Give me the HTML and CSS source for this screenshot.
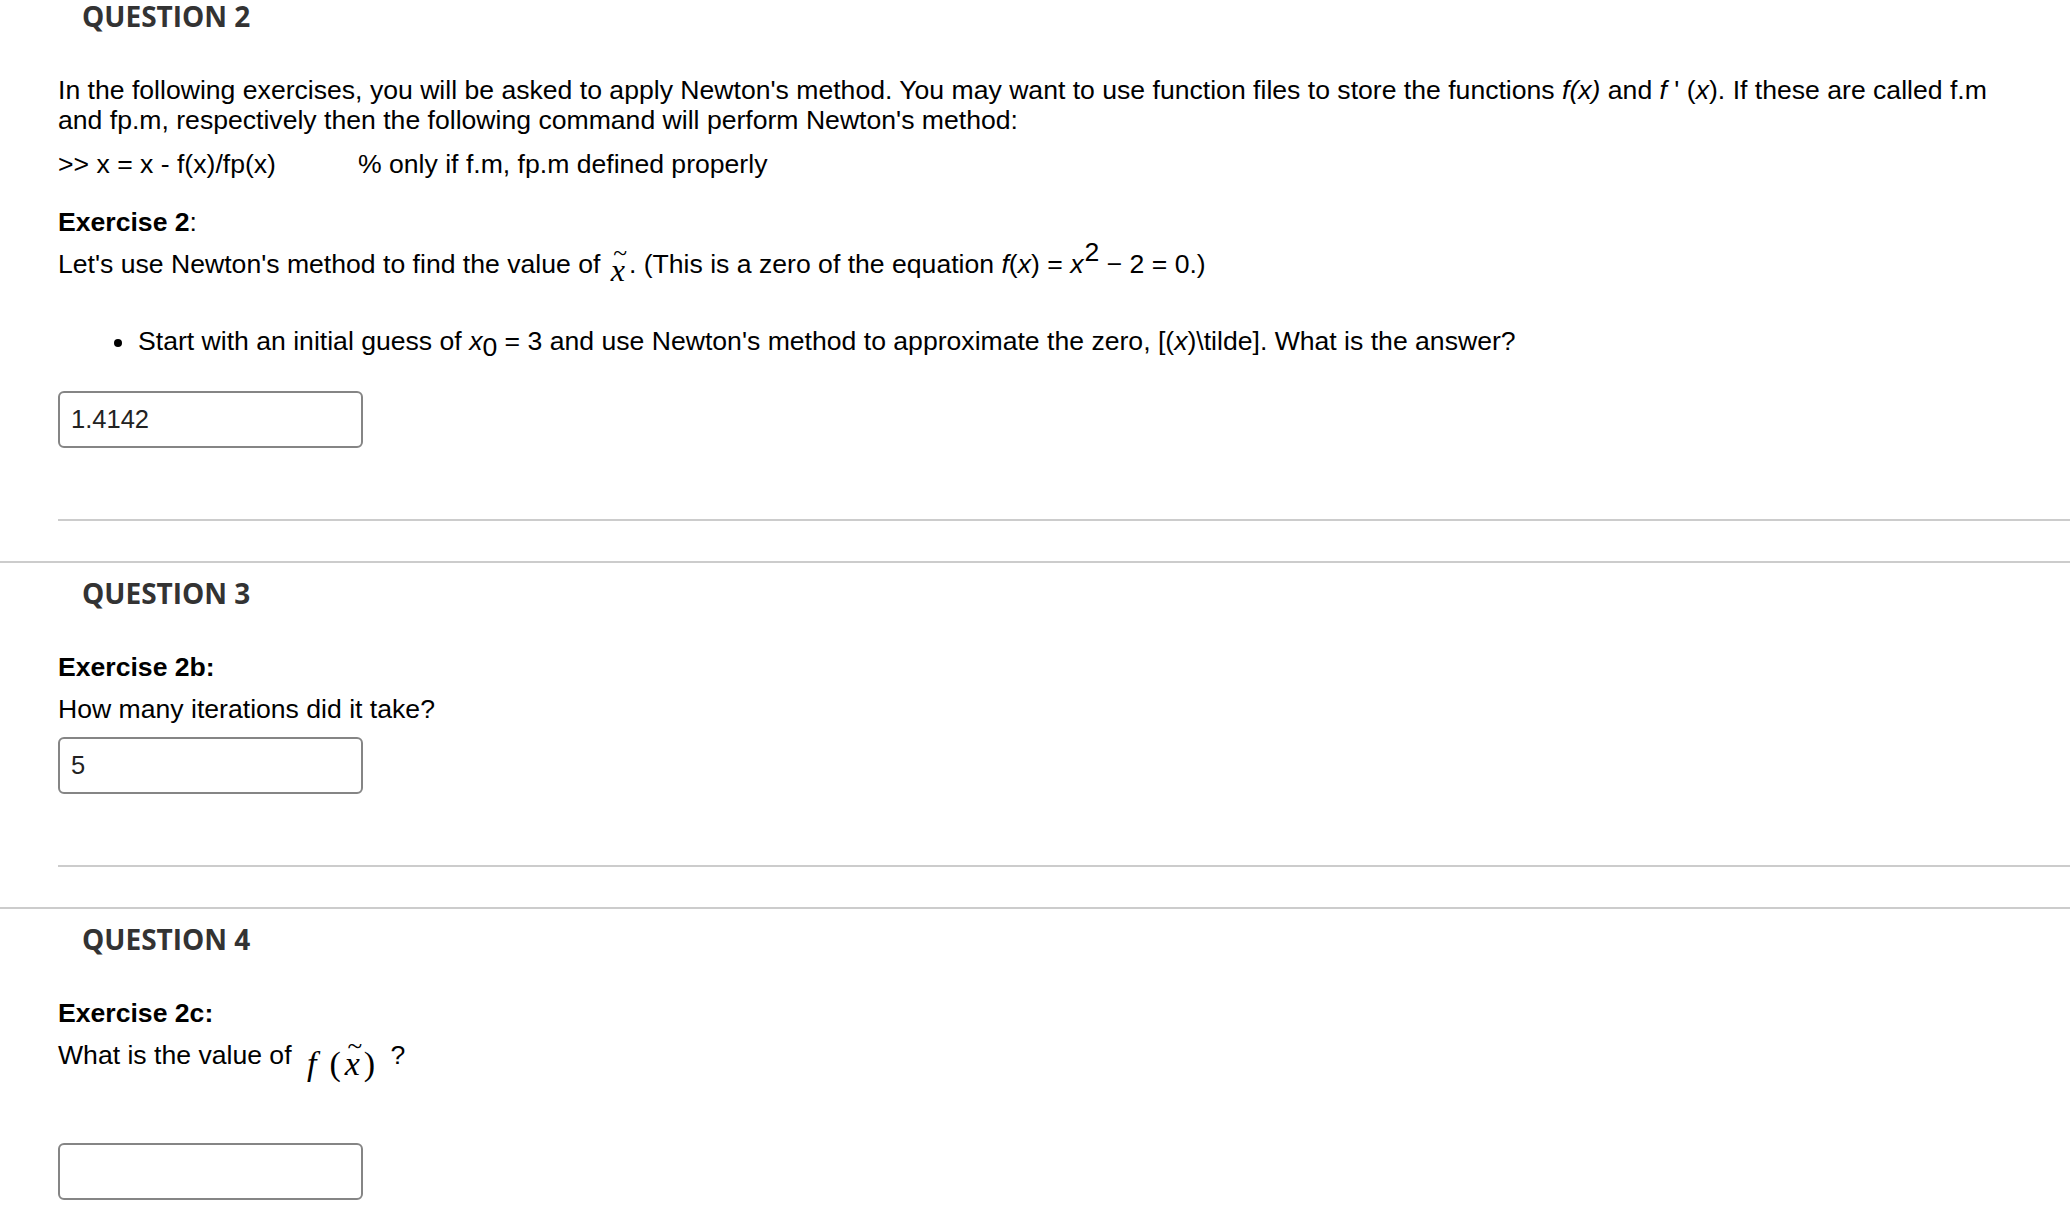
FILE: index.html
```html
<!DOCTYPE html>
<html lang="en">
<head>
<meta charset="utf-8">
<title>Questions</title>
<link rel="stylesheet" href="styles.css">
</head>
<body>
<div class="page">
  <section class="question">
    <h2 class="q-title">QUESTION 2</h2>
    <div class="q-body">
      <p class="para">In the following exercises, you will be asked to apply Newton's method. You may want to use function files to store the functions <i>f(x)</i> and <i>f</i> ' (<i>x</i>). If these are called f.m<br>and fp.m, respectively then the following command will perform Newton's method:</p>
      <p class="code"><span class="cmd">&gt;&gt; x = x - f(x)/fp(x)</span>% only if f.m, fp.m defined properly</p>
      <p class="ex ex-first"><b>Exercise 2</b>:</p>
      <p class="text">Let's use Newton's method to find the value of <span class="xt xt-low">x</span>. (This is a zero of the equation <i>f</i>(<i>x</i>) = <i>x</i><span class="sup">2</span> − 2 = 0.)</p>
      <ul class="bullets">
        <li>Start with an initial guess of <i>x</i><span class="sub">0</span> = 3 and use Newton's method to approximate the zero, [(<i>x</i>)\tilde]. What is the answer?</li>
      </ul>
      <input class="answer answer-q2" type="text" value="1.4142">
      <hr class="sep">
    </div>
  </section>

  <section class="question">
    <h2 class="q-title">QUESTION 3</h2>
    <div class="q-body">
      <p class="ex"><b>Exercise 2b:</b></p>
      <p class="text">How many iterations did it take?</p>
      <input class="answer answer-q3" type="text" value="5">
      <hr class="sep">
    </div>
  </section>

  <section class="question">
    <h2 class="q-title">QUESTION 4</h2>
    <div class="q-body">
      <p class="ex"><b>Exercise 2c:</b></p>
      <p class="text">What is the value of <span class="math"><i class="mf">f</i><span class="paren pl">(</span><span class="xt xt-m">x</span><span class="paren pr">)</span></span> ?</p>
      <input class="answer answer-q4" type="text" value="">
    </div>
  </section>
</div>
</body>
</html>
```

FILE: styles.css
```css
* {
  box-sizing: border-box;
}

body {
  margin: 0;
  background: #ffffff;
  color: #000000;
  font-family: "Liberation Sans", Arial, Helvetica, sans-serif;
  font-size: 26.6px;
  line-height: 30px;
}

.page {
  margin-top: -16px;
}

.question {
  border-top: 2px solid #cccccc;
  padding-top: 11px;
}

.q-title {
  margin: 0;
  padding-left: 82px;
  font-family: "Open Sans", "Liberation Sans", sans-serif;
  font-weight: 700;
  font-size: 28px;
  line-height: 38px;
  color: #333333;
}

.q-body {
  padding-left: 58px;
  padding-top: 40px;
}

p {
  margin: 0;
}

.code {
  margin-top: 14px;
}

.cmd {
  display: inline-block;
  width: 300px;
}

.ex-first {
  margin-top: 28px;
}

.text {
  margin-top: 12px;
}

.sup {
  vertical-align: 0.45em;
  line-height: 0;
  margin-left: 1px;
}

.sub {
  vertical-align: -0.22em;
  line-height: 0;
}

.xt {
  position: relative;
  font-family: "Liberation Serif", "Times New Roman", serif;
  font-style: italic;
}

.xt::before {
  content: "~";
  position: absolute;
  left: 0.1em;
  top: -0.45em;
  font-style: normal;
  font-size: 0.8em;
  line-height: 1;
}

.xt-low {
  vertical-align: -0.24em;
  line-height: 0;
  font-size: 32px;
  margin-left: 3px;
  margin-right: 4px;
}

.bullets {
  list-style: none;
  margin: 47px 0 0 0;
  padding: 0 0 0 80px;
}

.bullets li::before {
  content: "";
  display: inline-block;
  width: 8px;
  height: 8px;
  border-radius: 50%;
  background: #000000;
  vertical-align: middle;
  margin-left: -24px;
  margin-right: 16px;
}

.answer {
  display: block;
  width: 305px;
  height: 57px;
  margin: 0;
  padding: 0 11px;
  border: 2px solid #858585;
  border-radius: 6px;
  background: #ffffff;
  font-family: "Liberation Sans", Arial, sans-serif;
  font-size: 25.5px;
  color: #222222;
  outline: none;
}

.answer-q2 {
  margin-top: 35px;
}

.answer-q3 {
  margin-top: 13px;
}

.answer-q4 {
  margin-top: 73px;
}

.sep {
  border: 0;
  border-top: 2px solid #cccccc;
  height: 0;
  margin: 71px 0 40px 0;
}

.math {
  font-family: "Liberation Serif", "Times New Roman", serif;
  font-size: 34px;
  line-height: 0;
  vertical-align: -0.33em;
  margin-left: 8px;
  margin-right: 8px;
}

.mf {
  font-style: italic;
}

.paren {
  font-style: normal;
}

.pl {
  margin-left: 13px;
  margin-right: 4px;
}

.pr {
  margin-left: 4px;
}
```
